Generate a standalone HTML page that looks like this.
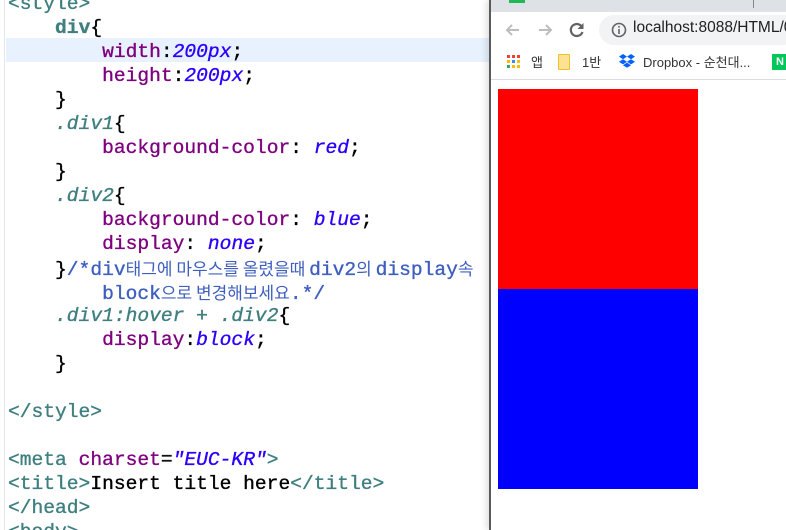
<!DOCTYPE html>
<html><head><meta charset="utf-8"><style>
*{margin:0;padding:0;box-sizing:border-box}
body{width:786px;height:530px;overflow:hidden;background:#fff;position:relative;font-family:"Liberation Mono","Noto Sans CJK KR",monospace}
.ed{position:absolute;left:0;top:0;width:490px;height:530px;background:#fff;overflow:hidden}
.gut{position:absolute;left:4px;top:0;width:1px;height:530px;background:#e6e6e6}
.hl{position:absolute;left:6px;top:38px;width:484px;height:24px;background:#e8f2fe}
.ln{position:absolute;left:8px;height:24px;line-height:24px;font-size:19.6px;white-space:pre;color:#000;-webkit-text-stroke:0.35px currentColor;margin-top:2px}
.t{color:#3f7f7f}.p{color:#7f007f}.v{color:#2a00ff;font-style:italic}.s{color:#3f7f7f;font-style:italic}.c{color:#3f5fbf}.k{color:#3f7f7f;font-weight:bold}
.kr{font-family:"Noto Sans CJK KR",sans-serif;font-size:17px;-webkit-text-stroke:0}
.br{position:absolute;left:489px;top:0;width:297px;height:530px;background:#fff;border-left:2px solid #5a5a5a;box-shadow:-3px 0 6px rgba(0,0,0,.12)}
.bk{position:absolute;font-family:'Liberation Sans','Noto Sans CJK KR',sans-serif;font-size:13px;color:#333;white-space:nowrap}
</style></head><body>
<div class="ed">
<div class="gut"></div>
<div class="hl"></div>
<div class="ln t" style="top:-10px">&lt;style&gt;</div>
<div class="ln" style="top:14px">    <span class="k">div</span>{</div>
<div class="ln" style="top:38px">        <span class="p">width</span>:<span class="v">200px</span>;</div>
<div class="ln" style="top:62px">        <span class="p">height</span>:<span class="v">200px</span>;</div>
<div class="ln" style="top:86px">    }</div>
<div class="ln" style="top:110px">    <span class="s">.div1</span>{</div>
<div class="ln" style="top:134px">        <span class="p">background-color</span>: <span class="v">red</span>;</div>
<div class="ln" style="top:158px">    }</div>
<div class="ln" style="top:182px">    <span class="s">.div2</span>{</div>
<div class="ln" style="top:206px">        <span class="p">background-color</span>: <span class="v">blue</span>;</div>
<div class="ln" style="top:230px">        <span class="p">display</span>: <span class="v">none</span>;</div>
<div class="ln" style="top:254px">    }<span class="c">/*div<span class="kr">태그에 마우스를 올렸을때 </span>div2<span class="kr">의 </span>display<span class="kr">속</span></span></div>
<div class="ln" style="top:278px">        <span class="c">block<span class="kr">으로 변경해보세요</span>.*/</span></div>
<div class="ln" style="top:302px">    <span class="s">.div1:hover + .div2</span>{</div>
<div class="ln" style="top:326px">        <span class="p">display</span>:<span class="v">block</span>;</div>
<div class="ln" style="top:350px">    }</div>
<div class="ln t" style="top:398px">&lt;/style&gt;</div>
<div class="ln" style="top:446px"><span class="t">&lt;meta</span> <span class="p">charset</span>=<span class="v">"EUC-KR"</span><span class="t">&gt;</span></div>
<div class="ln" style="top:470px"><span class="t">&lt;title&gt;</span>Insert title here<span class="t">&lt;/title&gt;</span></div>
<div class="ln t" style="top:494px">&lt;/head&gt;</div>
<div class="ln t" style="top:518px">&lt;body&gt;</div>
</div>
<div class="br">
<div style="position:absolute;left:0;top:0;width:297px;height:12px;background:#dee1e6"></div>
<div style="position:absolute;left:18px;top:0;width:16px;height:3px;background:#1db954"></div>
<div style="position:absolute;left:262px;top:0;width:1px;height:8px;background:#888"></div>
<svg style="position:absolute;left:12px;top:20px" width="20" height="20" viewBox="0 0 20 20"><path d="M16 10H4M9 5L4 10L9 15" stroke="#bdbdbd" stroke-width="2" fill="none"/></svg>
<svg style="position:absolute;left:44px;top:20px" width="20" height="20" viewBox="0 0 20 20"><path d="M4 10H16M11 5L16 10L11 15" stroke="#bdbdbd" stroke-width="2" fill="none"/></svg>
<svg style="position:absolute;left:76px;top:20px" width="20" height="20" viewBox="0 0 20 20"><path d="M15.5 8A6 6 0 1 0 15.5 12" stroke="#5f6368" stroke-width="2.2" fill="none"/><path d="M16.5 3V9H10.5Z" fill="#5f6368"/></svg>
<div style="position:absolute;left:108px;top:15px;width:200px;height:30px;border-radius:15px;background:#f1f3f4"></div>
<svg style="position:absolute;left:120px;top:22px" width="16" height="16" viewBox="0 0 16 16"><circle cx="8" cy="8" r="6.5" stroke="#5f6368" stroke-width="1.6" fill="none"/><rect x="7.2" y="7" width="1.6" height="5" fill="#5f6368"/><rect x="7.2" y="4" width="1.6" height="1.6" fill="#5f6368"/></svg>
<div style="position:absolute;left:142px;top:19px;font-family:'Liberation Sans',sans-serif;font-size:15.5px;color:#202124;white-space:nowrap">localhost:8088/HTML/02</div>
<svg style="position:absolute;left:16px;top:55px" width="14" height="14" viewBox="0 0 14 14">
<rect x="0" y="0" width="3" height="3" fill="#ea4335"/><rect x="5" y="0" width="3" height="3" fill="#ea4335"/><rect x="10" y="0" width="3" height="3" fill="#ea4335"/>
<rect x="0" y="5" width="3" height="3" fill="#fbbc05"/><rect x="5" y="5" width="3" height="3" fill="#4285f4"/><rect x="10" y="5" width="3" height="3" fill="#fbbc05"/>
<rect x="0" y="10" width="3" height="3" fill="#34a853"/><rect x="5" y="10" width="3" height="3" fill="#fbbc05"/><rect x="10" y="10" width="3" height="3" fill="#fbbc05"/></svg>
<div class="bk" style="left:40px;top:52px">앱</div>
<div style="position:absolute;left:67px;top:54px;width:12px;height:16px;background:#fde293;border:1px solid #f0c030;border-radius:1px"></div>
<div class="bk" style="left:91px;top:52px">1반</div>
<svg style="position:absolute;left:128px;top:54px" width="16" height="14" viewBox="0 0 16 14"><path d="M4 0L0 2.6L4 5.2L8 2.6ZM12 0L8 2.6L12 5.2L16 2.6ZM0 7.8L4 10.4L8 7.8L4 5.2ZM12 5.2L8 7.8L12 10.4L16 7.8ZM4 11.2L8 13.8L12 11.2L8 8.6Z" fill="#0061fe"/></svg>
<div class="bk" style="left:152px;top:52px">Dropbox - 순천대...</div>
<div style="position:absolute;left:281px;top:54px;width:16px;height:16px;background:#03c75a;color:#fff;font:bold 11px 'Liberation Sans',sans-serif;text-align:center;line-height:16px">N</div>
<div style="position:absolute;left:0;top:79px;width:297px;height:1px;background:#dadce0"></div>
<div style="position:absolute;left:7px;top:89px;width:200px;height:200px;background:#f00"></div>
<div style="position:absolute;left:7px;top:289px;width:200px;height:200px;background:#00f"></div>
</div>
</body></html>
